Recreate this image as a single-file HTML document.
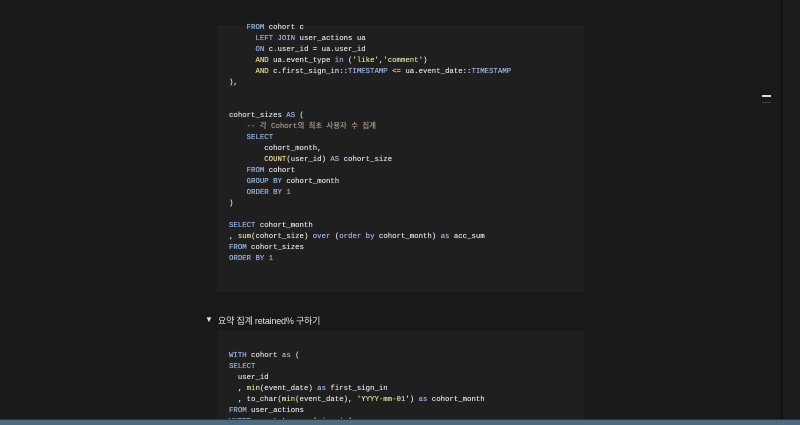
<!DOCTYPE html>
<html><head><meta charset="utf-8"><style>
html,body{margin:0;width:800px;height:425px;overflow:hidden}
body{background:#191919;position:relative;font-family:"Liberation Sans","Noto Sans CJK KR",sans-serif}
.blk{position:absolute;left:217px;width:367px;background:#1f1f1f}
pre{position:absolute;left:229px;margin:0;font-family:"Liberation Mono","Noto Sans CJK KR",monospace;font-size:7.35px;line-height:11px;color:#dcdcdc;text-shadow:0 0 0.4px #dcdcdc}
.k{color:#84a8dc}.f{color:#e6d67c}.s{color:#dcd98c}.c{color:#9e8c72}.n{color:#d68c8c}
</style></head><body>
<div class="blk" style="top:25px;height:267px"></div>
<div class="blk" style="top:331px;height:100px"></div>
<pre style="top:23px">    <span class="k">FROM</span> cohort c
      <span class="k">LEFT JOIN</span> user_actions ua
      <span class="k">ON</span> c.user_id = ua.user_id
      <span class="f">AND</span> ua.event_type <span class="k">in</span> (<span class="s">'like'</span>,<span class="s">'comment'</span>)
      <span class="f">AND</span> c.first_sign_in::<span class="k">TIMESTAMP</span> <span class="f">&lt;=</span> ua.event_date::<span class="k">TIMESTAMP</span>
),


cohort_sizes <span class="k">AS</span> (
    <span class="c">-- 각 Cohort의 최초 사용자 수 집계</span>
    <span class="k">SELECT</span>
        cohort_month,
        <span class="f">COUNT</span>(user_id) <span class="k">AS</span> cohort_size
    <span class="k">FROM</span> cohort
    <span class="k">GROUP BY</span> cohort_month
    <span class="k">ORDER BY</span> <span class="n">1</span>
)

<span class="k">SELECT</span> cohort_month
, <span class="f">sum</span>(cohort_size) <span class="k">over</span> (<span class="k">order by</span> cohort_month) <span class="k">as</span> acc_sum
<span class="k">FROM</span> cohort_sizes
<span class="k">ORDER BY</span> <span class="n">1</span></pre>
<div style="position:absolute;left:205px;top:315px;font-size:8px;color:#e0e0e0">▼</div>
<div style="position:absolute;left:218px;top:314px;font-size:9px;color:#e0e0e0;letter-spacing:-0.2px">요약 집계 retained% 구하기</div>
<pre style="top:351px"><span class="k">WITH</span> cohort <span class="k">as</span> (
<span class="k">SELECT</span>
  user_id
  , <span class="f">min</span>(event_date) <span class="k">as</span> first_sign_in
  , to_char(<span class="f">min</span>(event_date), <span class="s">'YYYY-mm-01'</span>) <span class="k">as</span> cohort_month
<span class="k">FROM</span> user_actions
<span class="k">WHERE</span> event_type = <span class="s">'sign-in'</span></pre>
<div style="position:absolute;left:762px;top:95px;width:9px;height:1.5px;background:#ddd"></div>
<div style="position:absolute;left:762px;top:102px;width:9px;height:1px;background:#444"></div>
<div style="position:absolute;left:781px;top:0;width:2px;height:420px;background:#0f0f0f"></div>
<div style="position:absolute;left:783px;top:0;width:17px;height:420px;background:#1c1c1e"></div>
<div style="position:absolute;left:0;top:419px;width:800px;height:1px;background:#2a3540"></div>
<div style="position:absolute;left:0;top:420px;width:800px;height:5px;background:#4d6a80"></div>
</body></html>
